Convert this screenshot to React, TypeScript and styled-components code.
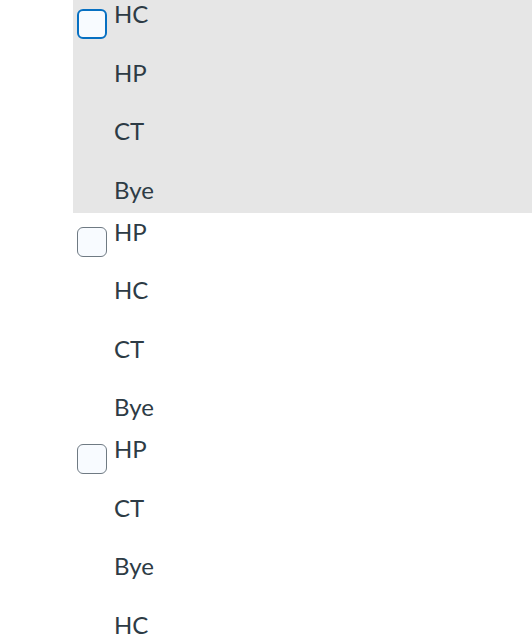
import React from "react";
import styled, { createGlobalStyle } from "styled-components";

const Global = createGlobalStyle`
  html, body { margin: 0; padding: 0; background: #ffffff; }
  body { font-family: Lato, "Noto Sans", sans-serif; color: #2d3b45; }
`;

const List = styled.div`
  display: flex;
  flex-direction: column;
  padding-left: 73px;
  margin-top: -5px;
`;

const Item = styled.label<{ $active?: boolean }>`
  display: flex;
  align-items: flex-start;
  gap: 7px;
  height: 217.5px;
  box-sizing: border-box;
  padding: 5px 0 0 4px;
  background: ${(p) => (p.$active ? "#e6e6e6" : "transparent")};
`;

const Box = styled.span<{ $focus?: boolean }>`
  flex: none;
  width: 30px;
  height: 30px;
  margin-top: 9px;
  box-sizing: border-box;
  border-radius: 6px;
  background: #f8fbff;
  border: ${(p) => (p.$focus ? "2px solid #0770c2" : "1px solid #6f7a83")};
`;

const Lines = styled.div`
  display: flex;
  flex-direction: column;
  gap: 30.67px;
`;

const Line = styled.div`
  font-size: 24px;
  line-height: 28px;
  color: #2d3b45;
`;

const items = [
  { lines: ["HC", "HP", "CT", "Bye"], active: true },
  { lines: ["HP", "HC", "CT", "Bye"] },
  { lines: ["HP", "CT", "Bye", "HC"] },
];

export default function App() {
  return (
    <>
      <Global />
      <List>
        {items.map((it, i) => (
          <Item key={i} $active={it.active}>
            <Box $focus={it.active} />
            <Lines>
              {it.lines.map((l, j) => (
                <Line key={j}>{l}</Line>
              ))}
            </Lines>
          </Item>
        ))}
      </List>
    </>
  );
}
